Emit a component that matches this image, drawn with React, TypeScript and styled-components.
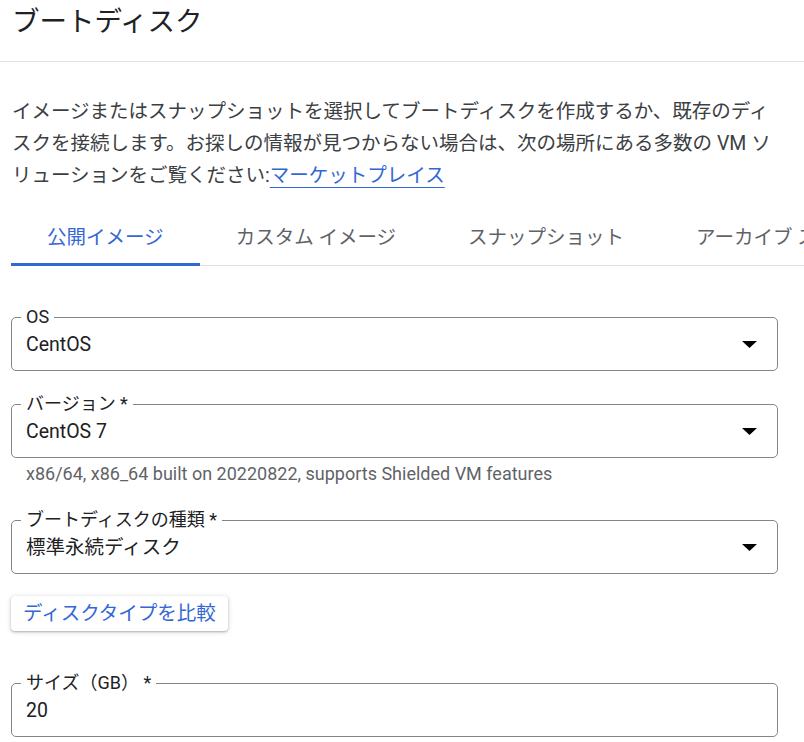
import React, { FC } from 'react';
import styled, { createGlobalStyle } from 'styled-components';

const GlobalStyle = createGlobalStyle`
  html, body {
    margin: 0;
    padding: 0;
    background: #ffffff;
  }
  body {
    font-family: Roboto, 'Noto Sans CJK JP', sans-serif;
    color: #202124;
    overflow: hidden;
  }
`;

const BLUE = '#3367d6';

const Page = styled.div`
  width: 804px;
  height: 742px;
  overflow: hidden;
`;

const Header = styled.header`
  height: 62px;
  border-bottom: 1px solid #e0e0e0;
  padding: 4px 0 0 12px;
  box-sizing: border-box;
`;

const Title = styled.h1`
  margin: 0;
  font-size: 27.5px;
  line-height: 36px;
  font-weight: 400;
  color: #202124;
`;

const Content = styled.main`
  padding-left: 11px;
`;

const Intro = styled.p`
  margin: 34px 0 0 1px;
  width: 780px;
  font-size: 19.5px;
  line-height: 32px;
  color: #3c4043;
  white-space: nowrap;
`;

const Link = styled.a`
  color: ${BLUE};
  text-decoration: underline;
  text-underline-offset: 5px;
  text-decoration-thickness: 1px;
`;

const TabBar = styled.div`
  margin-top: 22px;
  display: flex;
  border-bottom: 1px solid #e0e0e0;
  white-space: nowrap;
`;

const Tab = styled.div<{ $active?: boolean }>`
  flex: none;
  padding: 12px 36px 13px;
  margin-bottom: -1px;
  font-size: 19.5px;
  line-height: 24px;
  color: ${(p) => (p.$active ? BLUE : '#5f6368')};
  border-bottom: 3px solid ${(p) => (p.$active ? BLUE : 'transparent')};
`;

const Form = styled.div`
  margin-top: 41px;
  width: 767px;
  display: flex;
  flex-direction: column;
`;

const Outline = styled.fieldset<{ $gap: number }>`
  margin: 0 0 ${(p) => p.$gap}px;
  padding: 6px 20px 13px 14px;
  border: 1px solid #80868b;
  border-radius: 5px;
  min-width: 0;
`;

const Legend = styled.legend`
  margin-left: -5px;
  padding: 0 5px;
  font-size: 18px;
  line-height: 20px;
  color: #202124;
`;

const ValueRow = styled.div`
  display: flex;
  align-items: center;
  justify-content: space-between;
  height: 24px;
  font-size: 19.5px;
  line-height: 24px;
  color: #202124;
`;

const Arrow = styled.svg`
  flex: none;
  margin-top: -2px;
`;

const Hint = styled.div`
  margin: -18px 0 25px 15px;
  font-size: 18px;
  line-height: 22px;
  color: #5f6368;
`;

const CompareButton = styled.button`
  align-self: flex-start;
  height: 35px;
  padding: 0 12px;
  margin: -1px 0 42px;
  border: none;
  border-radius: 4px;
  background: #ffffff;
  color: ${BLUE};
  font-family: inherit;
  font-size: 19.5px;
  line-height: 24px;
  box-shadow: 0 1px 2px rgba(60, 64, 67, 0.3), 0 1px 4px 1px rgba(60, 64, 67, 0.15);
`;

interface FieldProps {
  label: string;
  value: string;
  select?: boolean;
  gap?: number;
}

const Field: FC<FieldProps> = ({ label, value, select, gap = 23 }) => (
  <Outline $gap={gap}>
    <Legend>{label}</Legend>
    <ValueRow>
      <span>{value}</span>
      {select && (
        <Arrow width="15" height="7" viewBox="0 0 15 7">
          <path d="M0 0 L15 0 L7.5 7 Z" fill="#000" />
        </Arrow>
      )}
    </ValueRow>
  </Outline>
);

const tabs = ['公開イメージ', 'カスタム イメージ', 'スナップショット', 'アーカイブ スナップショット'];

export default function App() {
  return (
    <Page>
      <GlobalStyle />
      <Header>
        <Title>ブートディスク</Title>
      </Header>
      <Content>
        <Intro>
          イメージまたはスナップショットを選択してブートディスクを作成するか、既存のディ
          <br />
          スクを接続します。お探しの情報が見つからない場合は、次の場所にある多数の VM ソ
          <br />
          リューションをご覧ください:<Link href="#">マーケットプレイス</Link>
        </Intro>
        <TabBar>
          {tabs.map((t, i) => (
            <Tab key={t} $active={i === 0}>
              {t}
            </Tab>
          ))}
        </TabBar>
        <Form>
          <Field label="OS" value="CentOS" select />
          <Field label="バージョン *" value="CentOS 7" select />
          <Hint>x86/64, x86_64 built on 20220822, supports Shielded VM features</Hint>
          <Field label="ブートディスクの種類 *" value="標準永続ディスク" select gap={23} />
          <CompareButton>ディスクタイプを比較</CompareButton>
          <Field label="サイズ（GB） *" value="20" />
        </Form>
      </Content>
    </Page>
  );
}
